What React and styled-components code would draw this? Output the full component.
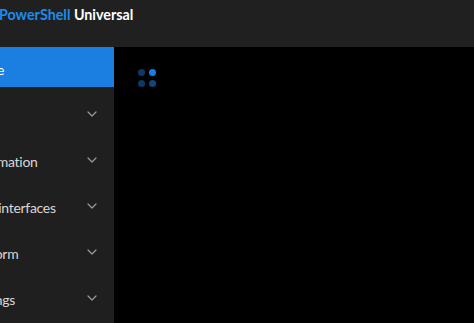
import React from 'react'
import styled, { createGlobalStyle } from 'styled-components'

const GlobalStyle = createGlobalStyle`
    html, body {
        margin: 0;
        padding: 0;
        background: #000;
        overflow: hidden;
    }
    body {
        font-family: Lato, "Noto Sans", sans-serif;
    }
`

// menu as seen (the drawer sits partly off the left edge)
const menu = [
    { label: 'Home', selected: true },
    { label: 'APIs', sub: true },
    { label: 'Automation', sub: true },
    { label: 'User interfaces', sub: true },
    { label: 'Platform', sub: true },
    { label: 'Settings', sub: true },
]

function Chevron() {
    return (
        <svg width="10" height="6" viewBox="0 0 10 6" fill="none">
            <polyline points="1,1 5,5 9,1" stroke="#9a9a9a" strokeWidth="1.2" strokeLinecap="round" strokeLinejoin="round" />
        </svg>
    )
}

function App() {
    return (
        <StPage>
            <GlobalStyle />
            <StHeader>
                <StBrand>
                    <StBrandBlue>PowerShell</StBrandBlue> Universal
                </StBrand>
            </StHeader>
            <StBody>
                <StSidebar>
                    {menu.map((item) => (
                        <StItem key={item.label} selected={item.selected}>
                            <StLabel selected={item.selected}>{item.label}</StLabel>
                            {item.sub && <StArrow><Chevron /></StArrow>}
                        </StItem>
                    ))}
                </StSidebar>
                <StContent>
                    <StSpin>
                        <StDot $o={0.45} />
                        <StDot $o={1} />
                        <StDot $o={0.45} />
                        <StDot $o={0.55} />
                    </StSpin>
                </StContent>
            </StBody>
        </StPage>
    )
}

export default App

const StPage = styled.div`
    display: flex;
    flex-direction: column;
    width: 100vw;
    height: 100vh;
    background: #000;
`
const StHeader = styled.header`
    height: 47px;
    flex-shrink: 0;
    background: #202020;
    padding-top: 7px;
    box-sizing: border-box;
`
const StBrand = styled.div`
    font-size: 14.3px;
    font-weight: 700;
    color: #fff;
    line-height: 16px;
    white-space: nowrap;
    margin-left: -1px;
`
const StBrandBlue = styled.span`
    color: #1a8cf0;
`
const StBody = styled.div`
    display: flex;
    flex: 1;
    min-height: 0;
`
const StSidebar = styled.nav`
    width: 114px;
    flex-shrink: 0;
    background: #1f1f1f;
    overflow: hidden;
    display: flex;
    flex-direction: column;
    gap: 6px;
`
const StItem = styled.div`
    display: flex;
    align-items: center;
    justify-content: space-between;
    height: 40px;
    flex-shrink: 0;
    background: ${(p) => (p.selected ? '#1a7fe1' : 'transparent')};
    padding-right: 17px;
`
const StLabel = styled.span`
    margin-left: -32px;
    font-size: 14px;
    letter-spacing: -0.3px;
    color: ${(p) => (p.selected ? '#fff' : '#d8d8d8')};
    white-space: nowrap;
    line-height: 20px;
    padding-top: 5px;
`
const StArrow = styled.span`
    display: flex;
    margin-top: 1px;
`
const StContent = styled.main`
    flex: 1;
    background: #000;
    padding: 22px 24px;
`
const StSpin = styled.div`
    display: grid;
    grid-template-columns: 7px 7px;
    gap: 4px;
    width: 18px;
`
const StDot = styled.i`
    display: block;
    width: 7px;
    height: 7px;
    border-radius: 50%;
    background: #1a7fe1;
    opacity: ${(p) => p.$o};
`
